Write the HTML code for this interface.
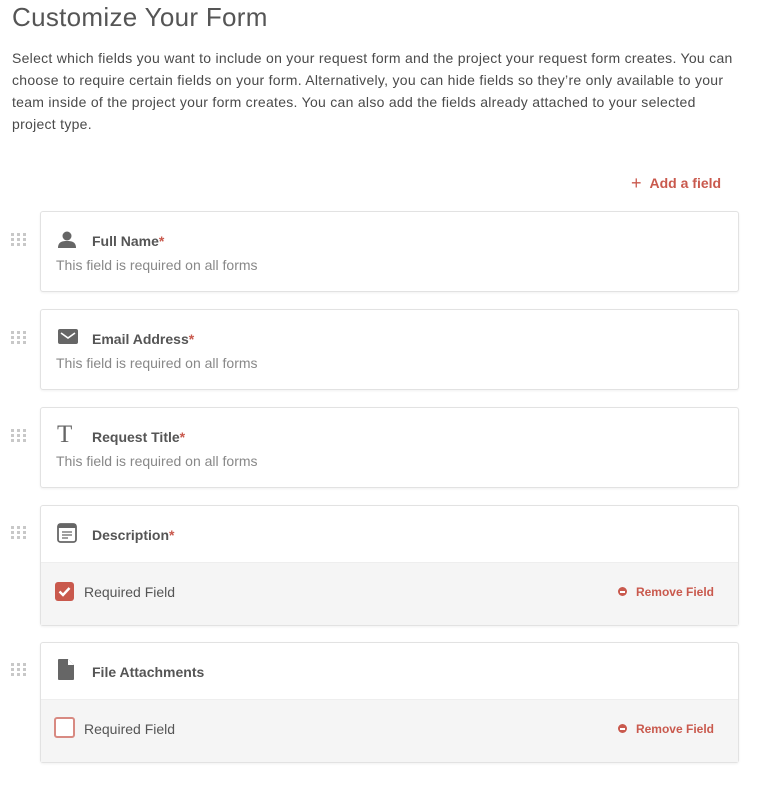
<!DOCTYPE html>
<html><head><style>
body{margin:0;width:770px;height:790px;background:#fff;font-family:"Liberation Sans",sans-serif;position:relative;overflow:hidden}
.a{position:absolute}
h1{position:absolute;left:12px;top:2px;margin:0;font-weight:normal;font-size:26px;color:#555;letter-spacing:0.3px}
p{position:absolute;left:12px;top:47px;width:760px;margin:0;font-size:14px;line-height:22px;color:#4a4a4a;letter-spacing:0.28px;white-space:nowrap}
.card{position:absolute;left:40px;width:697px;border:1px solid #e2e2e2;border-radius:3px;background:#fff;box-shadow:0 1px 2px rgba(0,0,0,.06)}
.t{position:absolute;left:51px;font-size:14px;font-weight:bold;color:#555}
.t b{color:#c9594d;font-weight:bold}
.s{position:absolute;left:15px;font-size:14px;color:#888}
.grip{position:absolute;left:11px}
.gray{position:absolute;left:0;right:0;bottom:0;height:62px;background:#f5f5f5;border-top:1px solid #eee}
.rf{position:absolute;left:43px;top:21px;font-size:14px;color:#555}
.rm{position:absolute;right:24px;top:22px;font-size:12px;color:#c9594d;font-weight:bold}
.rm span{display:inline-block;width:9px;height:9px;border-radius:50%;background:#c9594d;position:relative;top:0;margin-right:9px}
.rm span:after{content:"";position:absolute;left:2px;top:4px;width:5px;height:1.5px;background:#fff}
</style></head><body>
<h1>Customize Your Form</h1>
<p>Select which fields you want to include on your request form and the project your request form creates. You can<br>choose to require certain fields on your form. Alternatively, you can hide fields so they’re only available to your<br>team inside of the project your form creates. You can also add the fields already attached to your selected<br>project type.</p>
<div class="a" style="left:631px;top:172px;font-size:14px;color:#c9594d;font-weight:bold"><span style="font-weight:normal;font-size:18px;position:relative;top:1px;margin-right:8px">+</span>Add a field</div>

<div class="grip" style="top:233px"><svg width="18" height="14"><g fill="#c8c8c8"><rect x="0" y="0" width="3" height="3"/><rect x="6" y="0" width="3" height="3"/><rect x="12" y="0" width="3" height="3"/><rect x="0" y="5" width="3" height="3"/><rect x="6" y="5" width="3" height="3"/><rect x="12" y="5" width="3" height="3"/><rect x="0" y="10" width="3" height="3"/><rect x="6" y="10" width="3" height="3"/><rect x="12" y="10" width="3" height="3"/></g></svg></div>
<div class="grip" style="top:331px"><svg width="18" height="14"><g fill="#c8c8c8"><rect x="0" y="0" width="3" height="3"/><rect x="6" y="0" width="3" height="3"/><rect x="12" y="0" width="3" height="3"/><rect x="0" y="5" width="3" height="3"/><rect x="6" y="5" width="3" height="3"/><rect x="12" y="5" width="3" height="3"/><rect x="0" y="10" width="3" height="3"/><rect x="6" y="10" width="3" height="3"/><rect x="12" y="10" width="3" height="3"/></g></svg></div>
<div class="grip" style="top:429px"><svg width="18" height="14"><g fill="#c8c8c8"><rect x="0" y="0" width="3" height="3"/><rect x="6" y="0" width="3" height="3"/><rect x="12" y="0" width="3" height="3"/><rect x="0" y="5" width="3" height="3"/><rect x="6" y="5" width="3" height="3"/><rect x="12" y="5" width="3" height="3"/><rect x="0" y="10" width="3" height="3"/><rect x="6" y="10" width="3" height="3"/><rect x="12" y="10" width="3" height="3"/></g></svg></div>
<div class="grip" style="top:526px"><svg width="18" height="14"><g fill="#c8c8c8"><rect x="0" y="0" width="3" height="3"/><rect x="6" y="0" width="3" height="3"/><rect x="12" y="0" width="3" height="3"/><rect x="0" y="5" width="3" height="3"/><rect x="6" y="5" width="3" height="3"/><rect x="12" y="5" width="3" height="3"/><rect x="0" y="10" width="3" height="3"/><rect x="6" y="10" width="3" height="3"/><rect x="12" y="10" width="3" height="3"/></g></svg></div>
<div class="grip" style="top:663px"><svg width="18" height="14"><g fill="#c8c8c8"><rect x="0" y="0" width="3" height="3"/><rect x="6" y="0" width="3" height="3"/><rect x="12" y="0" width="3" height="3"/><rect x="0" y="5" width="3" height="3"/><rect x="6" y="5" width="3" height="3"/><rect x="12" y="5" width="3" height="3"/><rect x="0" y="10" width="3" height="3"/><rect x="6" y="10" width="3" height="3"/><rect x="12" y="10" width="3" height="3"/></g></svg></div>

<div class="card" style="top:211px;height:79px">
 <svg class="a" style="left:17px;top:19px" width="18" height="17" viewBox="0 0 18 17"><circle cx="9" cy="5" r="4.5" fill="#666"/><path d="M0 17 C0 11 4 10 9 10 C14 10 18 11 18 17Z" fill="#666"/></svg>
 <div class="t" style="top:21px">Full Name<b>*</b></div>
 <div class="s" style="top:45px">This field is required on all forms</div>
</div>
<div class="card" style="top:309px;height:79px">
 <svg class="a" style="left:17px;top:19px" width="20" height="15" viewBox="0 0 20 15"><rect width="20" height="15" rx="2" fill="#666"/><path d="M3 4 L10 9 L17 4" stroke="#fff" stroke-width="1.6" fill="none"/></svg>
 <div class="t" style="top:21px">Email Address<b>*</b></div>
 <div class="s" style="top:45px">This field is required on all forms</div>
</div>
<div class="card" style="top:407px;height:79px">
 <div class="a" style="left:16px;top:13px;font-family:'Liberation Serif',serif;font-size:25px;color:#666">T</div>
 <div class="t" style="top:21px">Request Title<b>*</b></div>
 <div class="s" style="top:45px">This field is required on all forms</div>
</div>
<div class="card" style="top:505px;height:119px">
 <svg class="a" style="left:16px;top:17px" width="20" height="20" viewBox="0 0 20 20"><rect x="1" y="1" width="18" height="18" rx="2.5" fill="none" stroke="#666" stroke-width="1.8"/><rect x="1" y="1" width="18" height="4" fill="#666"/><path d="M5 9h10M5 12h10M5 15h6" stroke="#666" stroke-width="1.3"/></svg>
 <div class="t" style="top:21px">Description<b>*</b></div>
 <div class="gray">
  <svg class="a" style="left:14px;top:19px" width="19" height="19"><rect width="19" height="19" rx="3" fill="#c9594d"/><path d="M4.5 9.5 L8 13 L14.5 6" stroke="#fff" stroke-width="2.4" fill="none"/></svg>
  <div class="rf">Required Field</div>
  <div class="rm"><span></span>Remove Field</div>
 </div>
</div>
<div class="card" style="top:642px;height:119px">
 <svg class="a" style="left:17px;top:16px" width="16" height="21" viewBox="0 0 16 21"><path d="M1 0 H10 L16 6 V20 A1 1 0 0 1 15 21 H1 A1 1 0 0 1 0 20 V1 A1 1 0 0 1 1 0Z" fill="#666"/><path d="M10 0 V6 H16" fill="#fff"/></svg>
 <div class="t" style="top:21px">File Attachments</div>
 <div class="gray">
  <div class="a" style="left:13px;top:17px;width:17px;height:17px;border:2px solid #d88a82;border-radius:3px;background:#fff"></div>
  <div class="rf">Required Field</div>
  <div class="rm"><span></span>Remove Field</div>
 </div>
</div>
</body></html>
